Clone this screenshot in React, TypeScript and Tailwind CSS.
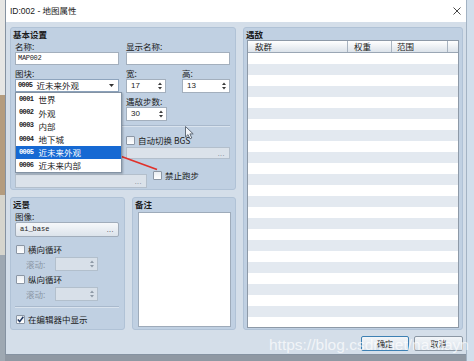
import React from "react";

const mono = "font-['Liberation_Mono','DejaVu_Sans_Mono',monospace]";

const Check = ({ checked = false, className = "" }: { checked?: boolean; className?: string }) => (
  <span
    className={`w-[9px] h-[9px] shrink-0 border border-[#8c97a5] bg-linear-to-b from-[#e9edf2] to-white rounded-[1px] flex items-center justify-center ${className}`}
  >
    {checked && (
      <svg width="7" height="7" viewBox="0 0 7 7">
        <path d="M0.8 3.6 L2.7 5.6 L6.3 0.8" stroke="#1d3560" strokeWidth="1.5" fill="none" />
      </svg>
    )}
  </span>
);

const Arrows = ({ color = "#3a3a3a" }: { color?: string }) => (
  <svg width="4" height="8" viewBox="0 0 4 8">
    <path d="M0 3 L2 0.6 L4 3 Z M0 5 L2 7.4 L4 5 Z" fill={color} />
  </svg>
);

const Spin = ({ value = "", className = "", disabled = false }: { value?: string; className?: string; disabled?: boolean }) => (
  <div
    className={`h-[14px] border flex items-center justify-between pl-[4px] pr-[3px] ${
      disabled ? "bg-[#d8e0e9] border-[#b2bfcc]" : "bg-white border-[#a3afbd]"
    } ${className}`}
  >
    <span className="text-[8px] font-['Liberation_Sans',sans-serif] leading-none">{value}</span>
    <Arrows color={disabled ? "#8e99a6" : "#3a3a3a"} />
  </div>
);

const Dots = ({ color = "#6d7785" }: { color?: string }) => (
  <span className="text-[7px] leading-none tracking-[0.5px] font-['Liberation_Sans',sans-serif]" style={{ color }}>
    ...
  </span>
);

const CheckRow = ({ label, checked = false, className = "" }: { label: string; checked?: boolean; className?: string }) => (
  <div className={`h-[9px] flex items-center gap-[3px] ${className}`}>
    <Check checked={checked} />
    <span className="text-[8.5px] leading-none whitespace-nowrap">{label}</span>
  </div>
);

const items = [
  ["0001", "世界"],
  ["0002", "外观"],
  ["0003", "内部"],
  ["0004", "地下城"],
  ["0005", "近未来外观"],
  ["0006", "近未来内部"],
];

export default function App() {
  return (
    <div className="relative w-[474px] h-[361px] overflow-hidden flex bg-[#8f98a3] font-['Noto_Sans_CJK_SC',sans-serif] text-[#1b1b1b]">
      {/* background map strip */}
      <div className="w-[5px] h-full flex flex-col shrink-0">
        <div className="h-[95px] bg-[#e6e6e4]" />
        <div className="h-[100px] bg-[#b49c7e]" />
        <div className="h-[60px] bg-[#d6d5cd]" />
        <div className="flex-1 bg-[#9ea8b2]" />
      </div>

      {/* window */}
      <div className="w-[461px] h-[355px] shrink-0 flex flex-col border-l border-b border-[#8592a1]">
        <div className="h-[22px] bg-white flex items-center pl-[4px] shrink-0">
          <span className="text-[8.5px] leading-none font-['Liberation_Sans','Noto_Sans_CJK_SC',sans-serif] text-[#1a1a1a]">
            ID:002 - 地图属性
          </span>
          <svg className="ml-auto mr-[5px]" width="8" height="8" viewBox="0 0 8 8">
            <path d="M0.5 0.5 L7.5 7.5 M7.5 0.5 L0.5 7.5" stroke="#333" strokeWidth="0.9" />
          </svg>
        </div>

        <div className="flex-1 bg-[#d4dee9] pl-[4px] pr-[3px] pt-[5px] flex flex-col">
          <div className="flex gap-[7px] h-[303px]">
            {/* left column */}
            <div className="w-[226px] flex flex-col gap-[7px]">
              {/* 基本设置 */}
              <div className="relative h-[163px] shrink-0 rounded-[3px] bg-[#c0d0e2] border border-[#b0c2d6] pl-[4px] pr-[5px] flex flex-col">
                <div className="h-[12px] flex items-center -ml-[2px] font-bold text-[8.5px] leading-none">基本设置</div>
                <div className="flex gap-[7px]">
                  <div className="w-[104px] flex flex-col">
                    <div className="h-[12px] flex items-center text-[8.5px] leading-none">名称:</div>
                    <div className={`h-[13px] bg-white border border-[#a3afbd] flex items-center pl-[2px] text-[7px] leading-none tracking-[-0.3px] ${mono}`}>
                      MAP002
                    </div>
                  </div>
                  <div className="w-[104px] flex flex-col">
                    <div className="h-[12px] flex items-center text-[8.5px] leading-none">显示名称:</div>
                    <div className="h-[13px] bg-white border border-[#a3afbd]" />
                  </div>
                </div>
                <div className="flex gap-[7px]">
                  <div className="w-[104px] flex flex-col">
                    <div className="h-[14px] pt-[2px] flex items-center text-[8.5px] leading-none">图块:</div>
                    <div className="h-[13px] bg-white border border-[#8ea4bd] flex items-center pl-[2px] pr-[4px]">
                      <span className={`text-[7px] leading-none font-bold tracking-[-0.6px] ${mono}`}>0005</span>
                      <span className="ml-[4px] text-[8.5px] leading-none">近未来外观</span>
                      <svg className="ml-auto" width="5" height="3" viewBox="0 0 5 3">
                        <path d="M0 0 L5 0 L2.5 3 Z" fill="#333" />
                      </svg>
                    </div>
                  </div>
                  <div className="w-[104px] flex gap-[16px]">
                    <div className="w-[40px] flex flex-col">
                      <div className="h-[14px] pt-[2px] flex items-center text-[8.5px] leading-none">宽:</div>
                      <Spin value="17" className="h-[13px]" />
                    </div>
                    <div className="w-[48px] flex flex-col">
                      <div className="h-[14px] pt-[2px] flex items-center text-[8.5px] leading-none">高:</div>
                      <Spin value="13" className="h-[13px]" />
                    </div>
                  </div>
                </div>
                <div className="flex gap-[7px]">
                  {/* left part lies under the open list */}
                  <div className="w-[104px] flex flex-col">
                    <div className="h-[14px]" />
                    <div className="h-[14px] bg-white border border-[#a3afbd]" />
                  </div>
                  <div className="w-[104px] flex flex-col">
                    <div className="h-[14px] pt-[2px] flex items-center text-[8.5px] leading-none">遇敌步数:</div>
                    <Spin value="30" className="w-[41px]" />
                  </div>
                </div>
                <div className="mt-[4px] h-[2px] border-t border-[#a9b9cc] border-b border-b-[#d9e3ee]" />
                <div className="mt-[9px] flex gap-[7px]">
                  <div className="w-[104px] flex flex-col">
                    <div className="h-[9px] flex items-center">
                      <Check />
                    </div>
                    <div className="mt-[2px] h-[12px] bg-[#dbe2ea] border border-[#b3bfcc]" />
                  </div>
                  <div className="w-[104px] flex flex-col">
                    <CheckRow label="自动切换 BGS" />
                    <div className="mt-[2px] h-[12px] bg-[#dbe2ea] border border-[#b3bfcc] flex items-center justify-end pr-[4px]">
                      <Dots />
                    </div>
                  </div>
                </div>
                <div className="flex">
                  <div className="w-[132px] flex flex-col">
                    <div className="mt-[2px] h-[9px] flex items-center">
                      <Check />
                    </div>
                    <div className="mt-[4px] h-[14px] bg-[#dbe2ea] border border-[#b3bfcc] flex items-center justify-end pr-[4px]">
                      <Dots />
                    </div>
                  </div>
                  <CheckRow label="禁止跑步" className="ml-[6px] mt-[12px]" />
                </div>

                {/* open dropdown list */}
                <div className="absolute left-[4px] top-[64px] w-[107px] h-[81px] bg-white border border-[#8493a4] shadow-[1px_1px_2px_rgba(0,0,0,0.25)] flex flex-col z-10">
                  {items.map(([n, t], i) => (
                    <div
                      key={n}
                      className={`flex-1 flex items-center pl-[3px] ${i === 4 ? "bg-[#1669d3] text-white" : "text-[#1b1b1b]"}`}
                    >
                      <span className={`text-[7px] leading-none font-bold tracking-[-0.6px] ${mono}`}>{n}</span>
                      <span className="ml-[5px] text-[8.5px] leading-none">{t}</span>
                    </div>
                  ))}
                </div>
              </div>

              {/* bottom row */}
              <div className="flex gap-[7px] h-[133px]">
                {/* 远景 */}
                <div className="w-[115px] h-full rounded-[3px] bg-[#c0d0e2] border border-[#b0c2d6] pl-[4px] pr-[5px] flex flex-col">
                  <div className="h-[12px] flex items-center -ml-[2px] font-bold text-[8.5px] leading-none">远景</div>
                  <div className="h-[12px] flex items-center text-[8.5px] leading-none">图像:</div>
                  <div className="h-[15px] rounded-[2px] border border-[#a1adbb] bg-linear-to-b from-[#f6f8fa] to-[#dce3eb] flex items-center justify-between pl-[4px] pr-[4px]">
                    <span className={`text-[7px] leading-none ${mono}`}>ai_base</span>
                    <Dots color="#333" />
                  </div>
                  <CheckRow label="横向循环" className="mt-[8px] ml-[1px]" />
                  <div className="mt-[3px] flex items-center pl-[11px]">
                    <span className="w-[29px] text-[8.5px] leading-none text-[#8b97a6]">滚动:</span>
                    <Spin disabled className="w-[43px]" />
                  </div>
                  <CheckRow label="纵向循环" className="mt-[4px] ml-[1px]" />
                  <div className="mt-[3px] flex items-center pl-[11px]">
                    <span className="w-[29px] text-[8.5px] leading-none text-[#8b97a6]">滚动:</span>
                    <Spin disabled className="w-[43px]" />
                  </div>
                  <div className="mt-[5px] h-[2px] border-t border-[#a9b9cc] border-b border-b-[#d9e3ee]" />
                  <CheckRow label="在编辑器中显示" checked className="mt-[7px] ml-[1px]" />
                </div>

                {/* 备注 */}
                <div className="w-[104px] h-full rounded-[3px] bg-[#c0d0e2] border border-[#b0c2d6] pl-[5px] pr-[4px] pb-[2px] flex flex-col">
                  <div className="h-[12px] flex items-center -ml-[3px] font-bold text-[8.5px] leading-none">备注</div>
                  <div className="mt-[2px] flex-1 bg-white border border-[#9eabba]" />
                </div>
              </div>
            </div>

            {/* 遇敌 */}
            <div className="w-[220px] h-full rounded-[3px] bg-[#c0d0e2] border border-[#b0c2d6] pl-[3px] pr-[3px] pb-[1px] flex flex-col">
              <div className="h-[12px] flex items-center -ml-[1px] font-bold text-[8.5px] leading-none">遇敌</div>
              <div className="flex-1 border border-[#8d99a7] bg-white flex flex-col overflow-hidden">
                <div className="h-[12px] shrink-0 flex bg-linear-to-b from-white to-[#dce3ea] border-b border-[#9aa6b4] text-[8.5px] leading-none">
                  <div className="w-[100px] border-r border-[#a9b4c1] flex items-center pl-[7px]">敌群</div>
                  <div className="w-[44px] border-r border-[#a9b4c1] flex items-center pl-[6px]">权重</div>
                  <div className="w-[56px] border-r border-[#a9b4c1] flex items-center pl-[5px]">范围</div>
                  <div className="flex-1" />
                </div>
                {Array.from({ length: 25 }).map((_, i) => (
                  <div key={i} className={`h-[11px] shrink-0 ${i % 2 === 1 ? "bg-[#e3e9f0]" : "bg-white"}`} />
                ))}
              </div>
            </div>
          </div>

          {/* buttons */}
          <div className="mt-[6px] flex justify-end gap-[5px]">
            <div className="w-[48px] h-[15px] rounded-[2px] border border-[#3d80b3] bg-linear-to-b from-[#f3f6f9] to-[#d8e1ea] flex items-center justify-center text-[8px] leading-none">
              确定
            </div>
            <div className="w-[49px] h-[15px] rounded-[2px] border border-[#8b97a4] bg-linear-to-b from-[#f3f6f9] to-[#d8e1ea] flex items-center justify-center text-[8px] leading-none">
              取消
            </div>
          </div>
        </div>
      </div>

      {/* window behind on right */}
      <div className="flex-1 h-full bg-[#d2dfec] border-l border-[#a3b3c4]" />

      {/* red annotation arrow */}
      <svg className="absolute left-[110px] top-[148px] pointer-events-none" width="52" height="26" viewBox="0 0 52 26">
        <line x1="6" y1="6.5" x2="47" y2="21.5" stroke="#e0312b" strokeWidth="1.8" />
        <path d="M4 5.6 L10 5.9 L8.6 9.4 Z" fill="#e0312b" />
      </svg>

      {/* mouse cursor */}
      <svg className="absolute left-[185px] top-[126px] pointer-events-none opacity-80" width="10" height="14" viewBox="0 0 10 14">
        <path d="M0.5 0.5 L0.5 11 L3 8.6 L5 12.8 L6.8 12 L4.9 7.9 L8.2 7.9 Z" fill="white" stroke="#3a4450" strokeWidth="0.9" />
      </svg>

      {/* watermark */}
      <div className="absolute left-[269px] top-[337px] text-[15.5px] leading-none text-white/70 font-['Liberation_Sans',sans-serif] pointer-events-none whitespace-nowrap">
        https://blog.csdn.net/nasilayn
      </div>
    </div>
  );
}
